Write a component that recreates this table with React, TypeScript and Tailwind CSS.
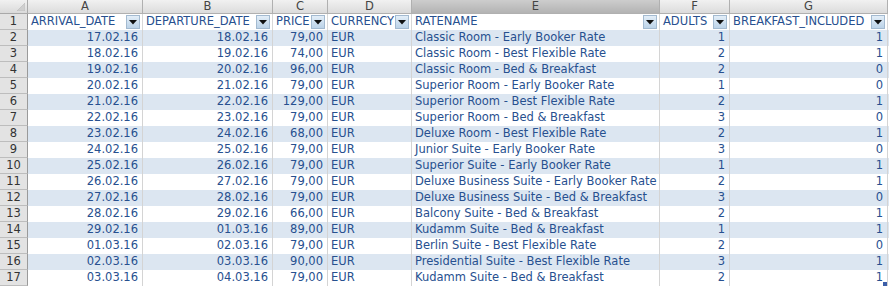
import React from 'react';

type Row = [string, string, string, string, string, string, string];

const rows: Row[] = [
    ['17.02.16', '18.02.16', '79,00', 'EUR', 'Classic Room - Early Booker Rate', '1', '1'],
    ['18.02.16', '19.02.16', '74,00', 'EUR', 'Classic Room - Best Flexible Rate', '2', '1'],
    ['19.02.16', '20.02.16', '96,00', 'EUR', 'Classic Room - Bed & Breakfast', '2', '0'],
    ['20.02.16', '21.02.16', '79,00', 'EUR', 'Superior Room - Early Booker Rate', '1', '0'],
    ['21.02.16', '22.02.16', '129,00', 'EUR', 'Superior Room - Best Flexible Rate', '2', '1'],
    ['22.02.16', '23.02.16', '79,00', 'EUR', 'Superior Room - Bed & Breakfast', '3', '0'],
    ['23.02.16', '24.02.16', '68,00', 'EUR', 'Deluxe Room - Best Flexible Rate', '2', '1'],
    ['24.02.16', '25.02.16', '79,00', 'EUR', 'Junior Suite - Early Booker Rate', '3', '0'],
    ['25.02.16', '26.02.16', '79,00', 'EUR', 'Superior Suite - Early Booker Rate', '1', '1'],
    ['26.02.16', '27.02.16', '79,00', 'EUR', 'Deluxe Business Suite - Early Booker Rate', '2', '1'],
    ['27.02.16', '28.02.16', '79,00', 'EUR', 'Deluxe Business Suite - Bed & Breakfast', '3', '0'],
    ['28.02.16', '29.02.16', '66,00', 'EUR', 'Balcony Suite - Bed & Breakfast', '2', '1'],
    ['29.02.16', '01.03.16', '89,00', 'EUR', 'Kudamm Suite - Bed & Breakfast', '1', '1'],
    ['01.03.16', '02.03.16', '79,00', 'EUR', 'Berlin Suite - Best Flexible Rate', '2', '0'],
    ['02.03.16', '03.03.16', '90,00', 'EUR', 'Presidential Suite - Best Flexible Rate', '3', '1'],
    ['03.03.16', '04.03.16', '79,00', 'EUR', 'Kudamm Suite - Bed & Breakfast', '2', '1'],
];

const headers = ['ARRIVAL_DATE', 'DEPARTURE_DATE', 'PRICE', 'CURRENCY', 'RATENAME', 'ADULTS', 'BREAKFAST_INCLUDED'];
const letters = ['A', 'B', 'C', 'D', 'E', 'F', 'G'];
// numeric columns are right aligned
const rightAligned = [true, true, true, false, false, true, true];

const gridCols = 'grid grid-cols-[28px_115px_130px_55px_84px_248px_70px_158px]';

const FilterButton = () => (
    <span className="w-[14px] h-[14px] shrink-0 flex items-center justify-center border border-[#a3bad0] bg-gradient-to-b from-[#e3eef8] to-[#bcd3e8]">
        <svg width="8" height="5" viewBox="0 0 8 5">
            <polygon points="0,0 8,0 4,4.5" fill="#111" />
        </svg>
    </span>
);

export default function App() {
    return (
        <div className="w-[889px] h-[286px] overflow-hidden bg-white text-[#27508f] font-['DejaVu_Sans',sans-serif] text-[11.5px] leading-none">
            {/* column letters */}
            <div className={`${gridCols} h-[14px]`}>
                <div className="relative border-r border-b border-[#a9a9a9] bg-gradient-to-b from-[#f1f1f1] to-[#dadada]">
                    <svg className="absolute right-[2px] bottom-[2px]" width="8" height="8" viewBox="0 0 8 8">
                        <polygon points="8,0 8,8 0,8" fill="#cfcfcf" stroke="#b5b5b5" strokeWidth="0.5" />
                    </svg>
                </div>
                {letters.map(l => (
                    <div
                        key={l}
                        className={`flex items-center justify-center border-r border-b border-[#b0b0b0] text-[11.5px] text-[#444] ${l === 'E' ? 'bg-gradient-to-b from-[#cdcdcd] to-[#b3b3b3]' : 'bg-gradient-to-b from-[#f1f1f1] to-[#dcdcdc]'}`}
                    >
                        {l}
                    </div>
                ))}
            </div>

            {/* header row */}
            <div className={`${gridCols} h-[16px]`}>
                <div className="flex items-center justify-center border-r border-b border-r-[#9a9a9a] border-b-[#bdbdbd] bg-[#e3e3e3] text-[11.5px] text-[#333]">1</div>
                {headers.map(h => (
                    <div key={h} className="flex items-center justify-between gap-[1px] pl-[3px] pr-[2px] border-r border-[#d8d8d8] bg-white">
                        <span className="whitespace-nowrap">{h}</span>
                        <FilterButton />
                    </div>
                ))}
            </div>

            {rows.map((r, i) => {
                const striped = i % 2 === 0;
                const isLast = i === rows.length - 1;
                return (
                    <div key={i} className={`${gridCols} h-[16px] ${striped ? 'bg-[#dce6f1]' : 'bg-white'}`}>
                        <div className="flex items-center justify-center border-r border-b border-r-[#9a9a9a] border-b-[#bdbdbd] bg-[#e3e3e3] text-[11.5px] text-[#333]">
                            {i + 2}
                        </div>
                        {r.map((v, j) => (
                            <div
                                key={j}
                                className={`flex items-center whitespace-nowrap border-r border-[#d4d4d4] ${rightAligned[j] ? 'justify-end pr-[4px]' : 'justify-start pl-[3px]'} ${j === 6 && isLast ? 'relative' : ''}`}
                            >
                                {v}
                                {j === 6 && isLast && (
                                    <span className="absolute right-0 bottom-0 w-[4px] h-[4px] bg-[#3b5ea8]" />
                                )}
                            </div>
                        ))}
                    </div>
                );
            })}
        </div>
    );
}
